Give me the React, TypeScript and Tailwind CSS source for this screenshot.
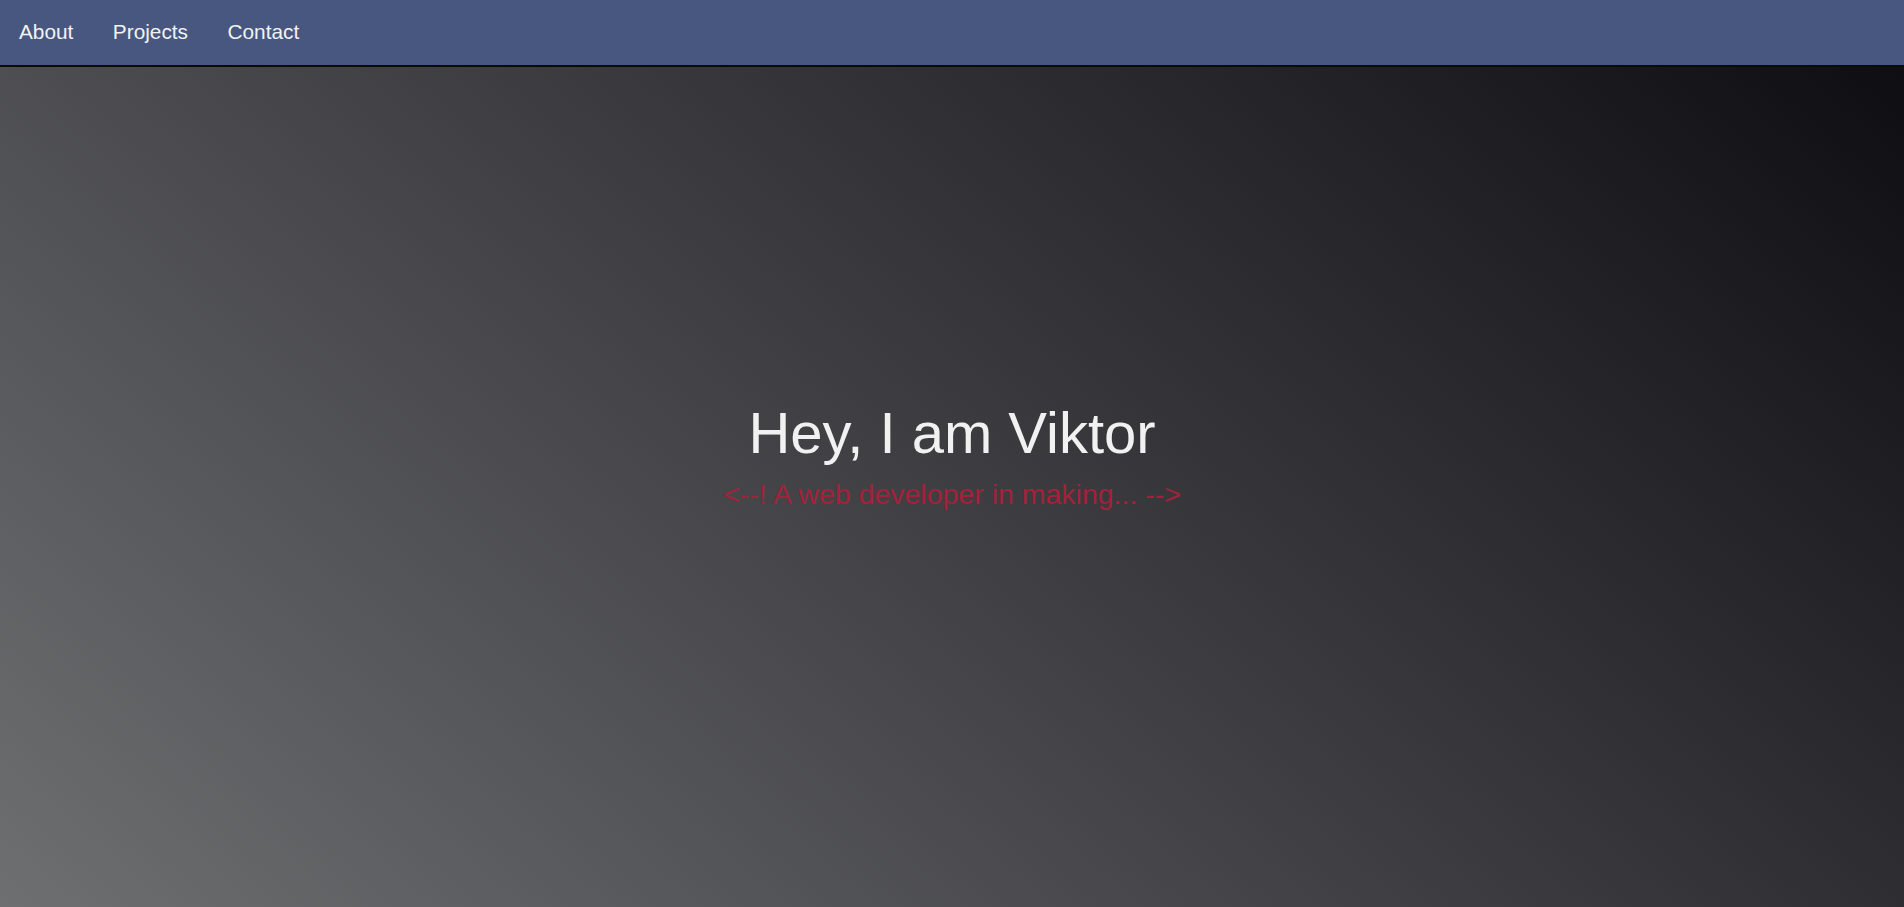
const links = ["About", "Projects", "Contact"];

function NavBar() {
  return (
    <nav className="fixed inset-x-0 top-0 z-10 flex h-[67px] items-center gap-[39.5px] border-b-2 border-[#0b0b0d] bg-[#47577f] pb-[2px] pl-[19px]">
      {links.map((label) => (
        <a
          key={label}
          href={`#${label.toLowerCase()}`}
          className="text-[20.8px] leading-[normal] text-[#f2f2f2]"
        >
          {label}
        </a>
      ))}
    </nav>
  );
}

export default function App() {
  return (
    <div className="min-h-screen font-['Liberation_Sans',Arial,sans-serif]">
      <NavBar />
      {/* hero fills the whole viewport, nav sits over its top edge */}
      <main className="flex h-screen flex-col items-center justify-center bg-[linear-gradient(41deg,#6e6f71,#0c0b10)] pt-[3px] text-center">
        <h1 className="mb-[12px] text-[58px] leading-[normal] text-[#f1f1f1]">
          Hey, I am Viktor
        </h1>
        <p className="text-[28.5px] leading-[normal] text-[#a3213b]">
          {"<--! A web developer in making... -->"}
        </p>
      </main>
    </div>
  );
}
